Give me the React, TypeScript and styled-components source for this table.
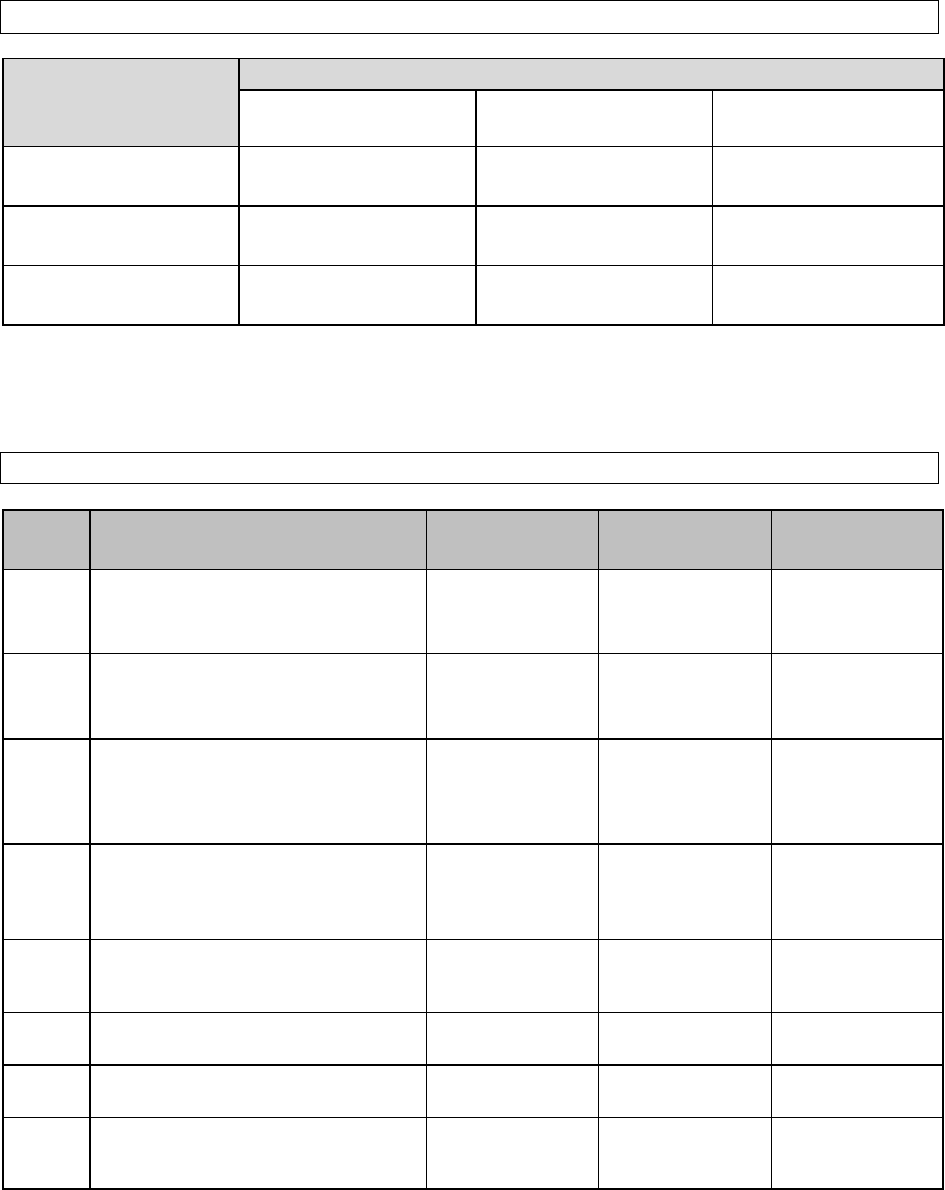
import React from 'react';
import styled, { createGlobalStyle } from 'styled-components';

const GlobalStyle = createGlobalStyle`
	html, body {
		margin: 0;
		padding: 0;
		background: #ffffff;
		font-family: "Liberation Sans", Arial, sans-serif;
	}
`;

const Page = styled.div`
	display: flex;
	flex-direction: column;
	align-items: flex-start;
	width: 945px;
`;

const TitleBox = styled.div<{ h: number; mt: number }>`
	box-sizing: border-box;
	width: 939px;
	height: ${p => p.h}px;
	margin-top: ${p => p.mt}px;
	border: 1px solid #000;
	background: #fff;
`;

const Grid = styled.div<{ cols: number[]; rows: number[]; top: number; mt: number }>`
	display: grid;
	grid-template-columns: ${p => p.cols.map(c => `${c}px`).join(' ')};
	grid-template-rows: ${p => p.rows.map(r => `${r}px`).join(' ')};
	margin-top: ${p => p.mt}px;
	margin-left: 2px;
	border-left: 2px solid #000;
	border-top: ${p => p.top}px solid #000;
`;

const Cell = styled.div<{ r: number; b: number; bg?: string; colSpan?: number; rowSpan?: number }>`
	box-sizing: border-box;
	border-right: ${p => p.r}px solid #000;
	border-bottom: ${p => p.b}px solid #000;
	background: ${p => p.bg ?? '#fff'};
	${p => (p.colSpan ? `grid-column: span ${p.colSpan};` : '')}
	${p => (p.rowSpan ? `grid-row: span ${p.rowSpan};` : '')}
`;

// first table: grouped header over three columns
const t1Cols = [236, 237, 236, 232];
const t1Right = [2, 2, 1, 2];
const t1Rows = [32, 56, 60, 59, 60];
const t1Bottom = [2, 1, 2, 1, 2];

// second table: one header row and eight body rows
const t2Cols = [87, 336, 172, 173, 172];
const t2Right = [2, 1, 1, 1, 2];
const t2Rows = [59, 84, 86, 105, 95, 73, 53, 52, 72];
const t2Bottom = [1, 1, 2, 2, 1, 1, 2, 1, 2];

const HEAD1 = '#d9d9d9';
const HEAD2 = '#c0c0c0';

export default function App() {
	return (
		<>
			<GlobalStyle />
			<Page>
				<TitleBox h={34} mt={0} />
				<Grid cols={t1Cols} rows={t1Rows} top={1} mt={24}>
					<Cell r={t1Right[0]} b={1} bg={HEAD1} rowSpan={2} />
					<Cell r={t1Right[3]} b={t1Bottom[0]} bg={HEAD1} colSpan={3} />
					{[1, 2, 3].map(c => (
						<Cell key={`s${c}`} r={t1Right[c]} b={t1Bottom[1]} />
					))}
					{[2, 3, 4].map(row =>
						t1Cols.map((_, c) => (
							<Cell key={`${row}-${c}`} r={t1Right[c]} b={t1Bottom[row]} />
						))
					)}
				</Grid>
				<TitleBox h={32} mt={126} />
				<Grid cols={t2Cols} rows={t2Rows} top={2} mt={25}>
					{t2Rows.map((_, row) =>
						t2Cols.map((_, c) => (
							<Cell
								key={`${row}-${c}`}
								r={t2Right[c]}
								b={t2Bottom[row]}
								bg={row === 0 ? HEAD2 : undefined}
							/>
						))
					)}
				</Grid>
			</Page>
		</>
	);
}
